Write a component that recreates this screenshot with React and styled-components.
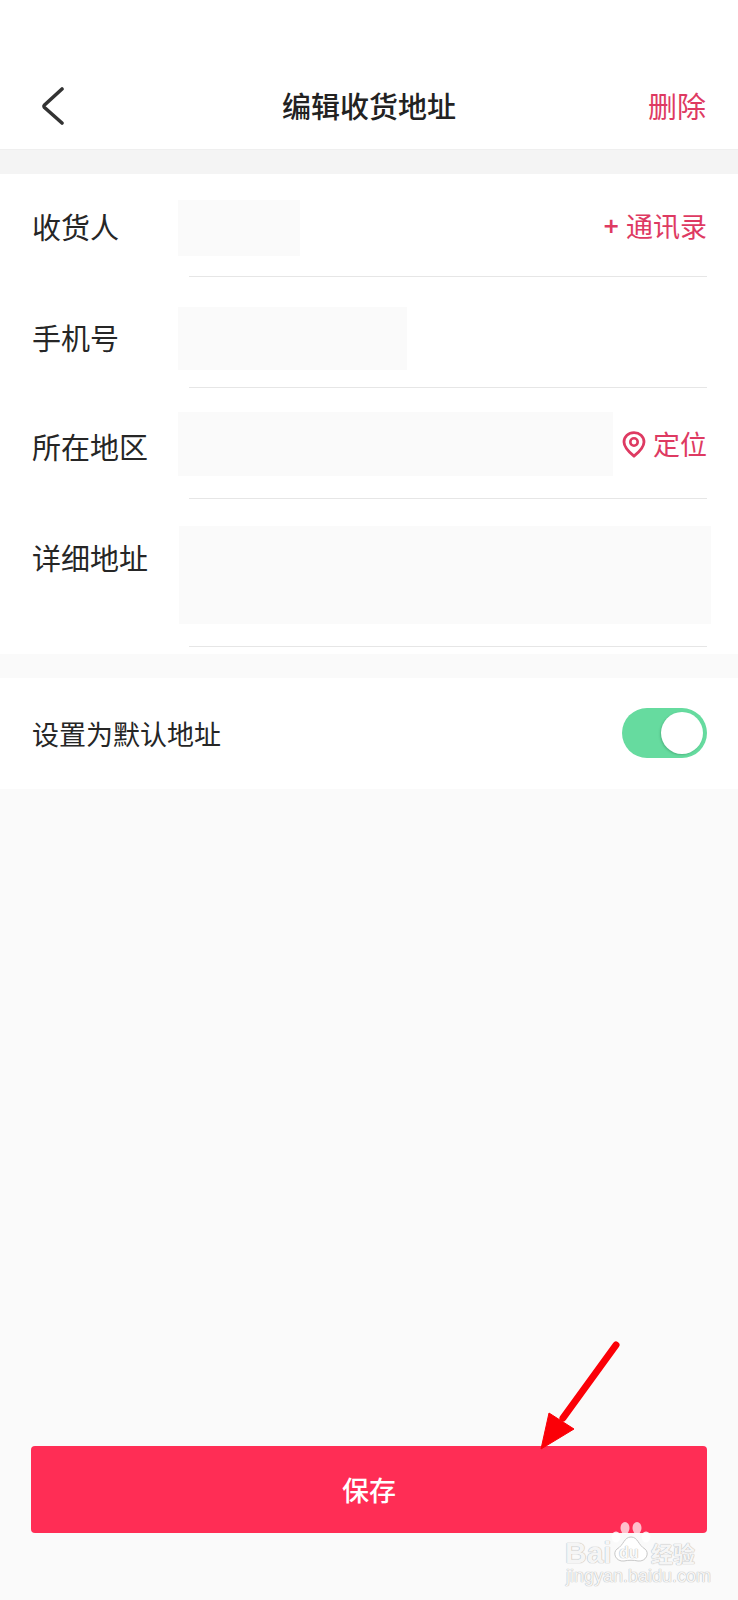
import React from "react";
import styled, { createGlobalStyle } from "styled-components";

const GlobalStyle = createGlobalStyle`
    html, body {
        margin: 0;
        padding: 0;
        background: #fafafa;
    }
    body {
        font-family: "Noto Sans CJK SC", "Noto Sans", sans-serif;
    }
`;

const Page = styled.div`
    position: relative;
    display: flex;
    flex-direction: column;
    width: 738px;
    height: 1600px;
    overflow: hidden;
    background: #fafafa;
`;

const NavBar = styled.header`
    display: grid;
    grid-template-columns: 1fr auto 1fr;
    align-items: center;
    box-sizing: border-box;
    height: 150px;
    padding: 60px 32px 0;
    background: #fff;
    border-bottom: 1px solid #efefef;
`;

const BackButton = styled.div`
    width: 24px;
    height: 40px;
    margin-left: 9px;
`;

const Title = styled.h1`
    margin: 0;
    font-size: 29px;
    font-weight: 500;
    line-height: 40px;
    color: #222;
`;

const DeleteLink = styled.span`
    justify-self: end;
    font-size: 29px;
    line-height: 40px;
    color: #de3a62;
`;

const Band = styled.div`
    height: ${(p) => p.$height}px;
    background: ${(p) => p.$color};
`;

const Section = styled.section`
    background: #fff;
    padding-bottom: ${(p) => p.$bottom || 0}px;
`;

const Row = styled.div`
    display: flex;
    align-items: flex-start;
    box-sizing: border-box;
    height: ${(p) => p.$height}px;
    padding: ${(p) => p.$padTop}px 31px 0 32px;
`;

const Label = styled.label`
    flex: 0 0 146px;
    margin-top: ${(p) => p.$shift || 0}px;
    font-size: 29px;
    line-height: 40px;
    color: #262626;
`;

const Input = styled.div`
    flex: 0 0 ${(p) => p.$width}px;
    height: ${(p) => p.$height}px;
    margin-left: ${(p) => p.$left || 0}px;
    background: #fafafa;
`;

const Action = styled.span`
    display: flex;
    align-items: center;
    gap: ${(p) => p.$gap}px;
    margin-left: auto;
    margin-top: ${(p) => p.$shift || 0}px;
    font-size: 27px;
    line-height: 36px;
    color: #de3a62;
`;

const Plus = styled.span`
    font-family: "Noto Sans", sans-serif;
    font-size: 27px;
    font-weight: 600;
`;

const Divider = styled.div`
    height: 1px;
    margin: 0 31px 0 189px;
    background: #e6e6e6;
`;

const SwitchRow = styled.div`
    display: flex;
    align-items: center;
    justify-content: space-between;
    box-sizing: border-box;
    height: 111px;
    padding: 0 31px 0 32px;
    background: #fff;
`;

const SwitchLabel = styled.span`
    font-size: 27px;
    line-height: 40px;
    color: #262626;
`;

const Switch = styled.div`
    display: flex;
    align-items: center;
    justify-content: flex-end;
    box-sizing: border-box;
    width: 85px;
    height: 50px;
    padding-right: 4px;
    margin-top: -1px;
    border-radius: 25px;
    background: #66db9f;
`;

const Knob = styled.div`
    width: 42px;
    height: 42px;
    border-radius: 50%;
    background: #fff;
    box-shadow: -1px 1px 2px rgba(40, 120, 80, 0.35);
`;

const Spacer = styled.div`
    flex: 1;
`;

const SaveButton = styled.button`
    display: block;
    width: 676px;
    height: 87px;
    margin: 0 31px 67px;
    padding: 0;
    border: 0;
    border-radius: 4px;
    background: #ff2d55;
    color: #fff;
    font-family: inherit;
    font-size: 27px;
    font-weight: 500;
`;

const ArrowMark = styled.svg`
    position: absolute;
    left: 530px;
    top: 1335px;
`;

const Watermark = styled.div`
    position: absolute;
    left: 565px;
    top: 1520px;
    width: 140px;
    height: 66px;
    color: rgba(255, 255, 255, 0.9);
    text-shadow: 0 0 1px #b4b4b4, 0 0 1px #b4b4b4;
`;

const Paw = styled.svg`
    position: absolute;
    left: 45px;
    top: 0;
`;

const Bai = styled.span`
    position: absolute;
    left: 0;
    top: 18px;
    font-family: "Liberation Sans", sans-serif;
    font-size: 30px;
    font-weight: 700;
    line-height: 30px;
`;

const Du = styled.span`
    position: absolute;
    left: 54px;
    top: 25px;
    font-family: "Liberation Sans", sans-serif;
    font-size: 16px;
    font-weight: 700;
    line-height: 16px;
    color: #fafafa;
`;

const Jingyan = styled.span`
    position: absolute;
    left: 86px;
    top: 19px;
    font-size: 22px;
    font-weight: 700;
    line-height: 26px;
`;

const Domain = styled.span`
    position: absolute;
    left: 1px;
    top: 47px;
    font-family: "Liberation Sans", sans-serif;
    font-size: 18px;
    line-height: 18px;
    white-space: nowrap;
`;

const BackIcon = () => (
    <svg width="24" height="40" viewBox="0 0 24 40" fill="none">
        <path
            d="M21 4 L3.5 20 Q2.5 21 3.5 22.5 L21 38"
            stroke="#333"
            strokeWidth="3.6"
            strokeLinecap="round"
            strokeLinejoin="round"
        />
    </svg>
);

const PinIcon = () => (
    <svg width="24" height="27" viewBox="0 0 24 27" fill="none">
        <path
            d="M12 25.2 C7.5 21.5 2 16.5 2 11 C2 5.5 6.5 1.6 12 1.6 C17.5 1.6 22 5.5 22 11 C22 16.5 16.5 21.5 12 25.2 Z"
            stroke="#de3a62"
            strokeWidth="2.8"
            strokeLinejoin="round"
        />
        <circle cx="12" cy="11" r="3.7" stroke="#de3a62" strokeWidth="2.6" />
    </svg>
);

const App = () => {
    return (
        <Page>
            <GlobalStyle />
            <NavBar>
                <BackButton>
                    <BackIcon />
                </BackButton>
                <Title>编辑收货地址</Title>
                <DeleteLink>删除</DeleteLink>
            </NavBar>
            <Band $height={24} $color="#f4f4f4" />
            <Section $bottom={7}>
                <Row $height={102} $padTop={26}>
                    <Label $shift={6}>收货人</Label>
                    <Input $width={122} $height={56} />
                    <Action $gap={7} $shift={8}>
                        <Plus>+</Plus>
                        通讯录
                    </Action>
                </Row>
                <Divider />
                <Row $height={110} $padTop={30}>
                    <Label $shift={10}>手机号</Label>
                    <Input $width={229} $height={63} />
                </Row>
                <Divider />
                <Row $height={110} $padTop={24}>
                    <Label $shift={14}>所在地区</Label>
                    <Input $width={435} $height={64} />
                    <Action $gap={7} $shift={14}>
                        <PinIcon />
                        定位
                    </Action>
                </Row>
                <Divider />
                <Row $height={147} $padTop={27}>
                    <Label $shift={11}>详细地址</Label>
                    <Input $width={532} $height={98} $left={1} />
                </Row>
                <Divider />
            </Section>
            <Band $height={24} $color="#fafafa" />
            <SwitchRow>
                <SwitchLabel>设置为默认地址</SwitchLabel>
                <Switch>
                    <Knob />
                </Switch>
            </SwitchRow>
            <Spacer />
            <SaveButton>保存</SaveButton>
            <ArrowMark width="100" height="125" viewBox="0 0 100 125">
                <path d="M86 10 L33 83" stroke="#fb0007" strokeWidth="7" strokeLinecap="round" />
                <path d="M11 114 L19 78 L44 94 Z" fill="#fb0007" stroke="#fb0007" strokeWidth="1" />
            </ArrowMark>
            <Watermark>
                <Paw width="42" height="44" viewBox="0 0 42 44">
                    <ellipse cx="15" cy="8" rx="4.5" ry="6" fill="#fff" fillOpacity="0.7" />
                    <ellipse cx="27" cy="8" rx="4.5" ry="6" fill="#fff" fillOpacity="0.7" />
                    <ellipse cx="6" cy="17" rx="4.5" ry="5.5" fill="#fff" fillOpacity="0.85" />
                    <ellipse cx="36" cy="17" rx="4.5" ry="5.5" fill="#fff" fillOpacity="0.85" />
                    <path
                        d="M21 17 C28 17 28 25 35 29 C40 33 36 42 28 41 C24 40 18 40 14 41 C6 42 2 33 7 29 C14 25 14 17 21 17 Z"
                        fill="#fff"
                        fillOpacity="0.85"
                        stroke="#c8c8c8"
                    />
                </Paw>
                <Bai>Bai</Bai>
                <Du>du</Du>
                <Jingyan>经验</Jingyan>
                <Domain>jingyan.baidu.com</Domain>
            </Watermark>
        </Page>
    );
};

export default App;
